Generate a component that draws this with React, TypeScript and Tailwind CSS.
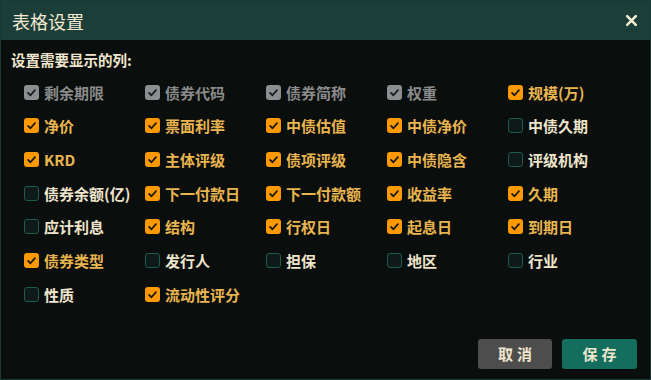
import React from 'react';

type State = 'locked' | 'on' | 'off';

const cols: { label: string; state: State }[] = [
  { label: '剩余期限', state: 'locked' },
  { label: '债券代码', state: 'locked' },
  { label: '债券简称', state: 'locked' },
  { label: '权重', state: 'locked' },
  { label: '规模(万)', state: 'on' },
  { label: '净价', state: 'on' },
  { label: '票面利率', state: 'on' },
  { label: '中债估值', state: 'on' },
  { label: '中债净价', state: 'on' },
  { label: '中债久期', state: 'off' },
  { label: 'KRD', state: 'on' },
  { label: '主体评级', state: 'on' },
  { label: '债项评级', state: 'on' },
  { label: '中债隐含', state: 'on' },
  { label: '评级机构', state: 'off' },
  { label: '债券余额(亿)', state: 'off' },
  { label: '下一付款日', state: 'on' },
  { label: '下一付款额', state: 'on' },
  { label: '收益率', state: 'on' },
  { label: '久期', state: 'on' },
  { label: '应计利息', state: 'off' },
  { label: '结构', state: 'on' },
  { label: '行权日', state: 'on' },
  { label: '起息日', state: 'on' },
  { label: '到期日', state: 'on' },
  { label: '债券类型', state: 'on' },
  { label: '发行人', state: 'off' },
  { label: '担保', state: 'off' },
  { label: '地区', state: 'off' },
  { label: '行业', state: 'off' },
  { label: '性质', state: 'off' },
  { label: '流动性评分', state: 'on' },
];

const Check = () => (
  <svg viewBox="0 0 16 16" className="w-[11px] h-[11px]">
    <path d="M3 8.5 L6.5 12 L13 4.5" fill="none" stroke="#1a1a1a" strokeWidth="2.6" strokeLinecap="round" strokeLinejoin="round" />
  </svg>
);

const Box = ({ state }: { state: State }) => {
  if (state === 'off')
    return <span className="w-[15px] h-[15px] rounded-[3px] border border-[#1d5a4f] bg-[#0e1a18] shrink-0" />;
  return (
    <span
      className={
        'w-[15px] h-[15px] rounded-[3px] flex items-center justify-center shrink-0 ' +
        (state === 'on' ? 'bg-[#ff9900]' : 'bg-[#8c8f92]')
      }
    >
      <Check />
    </span>
  );
};

export default function App() {
  return (
    <div
      className="w-[651px] h-[380px] flex flex-col bg-[#0a0e0d] border border-[#163a34] overflow-hidden"
      style={{ fontFamily: '"Noto Sans CJK SC", "Noto Sans", sans-serif' }}
    >
      <div className="h-[39px] bg-[#1c3e39] flex items-center justify-between pl-[11px] pr-[12px] shrink-0">
        <span className="text-[18px] text-[#f3ead2] leading-none">表格设置</span>
        <svg viewBox="0 0 12 12" className="w-[13px] h-[13px]">
          <path d="M2 2 L10 10 M10 2 L2 10" stroke="#f3ead2" strokeWidth="2.4" strokeLinecap="round" />
        </svg>
      </div>
      <div className="pl-[10px] pt-[11px] text-[14.5px] font-bold text-[#efe5cc] leading-[18px]">设置需要显示的列:</div>
      <div className="grid grid-cols-[121px_121px_121px_121px_121px] pl-[23px] pt-[13px] auto-rows-[33.7px]">
        {cols.map((c) => (
          <div key={c.label} className="flex items-center gap-[5px] h-[20px]">
            <Box state={c.state} />
            <span
              className={
                'text-[15px] font-bold leading-none whitespace-nowrap ' +
                (c.state === 'locked' ? 'text-[#8b8b8b]' : c.state === 'on' ? 'text-[#e9b54f]' : 'text-[#efe5cc]')
              }
            >
              {c.label}
            </span>
          </div>
        ))}
      </div>
      <div className="flex-1" />
      <div className="flex justify-end gap-[10px] pr-[13px] pb-[10px]">
        <button className="w-[74px] h-[30px] rounded-[3px] bg-[#4d4d4d] text-[#efe5cc] text-[15px] font-bold tracking-[4px] pl-[4px]">取消</button>
        <button className="w-[75px] h-[30px] rounded-[3px] bg-[#136e5e] text-[#efe5cc] text-[15px] font-bold tracking-[4px] pl-[4px]">保存</button>
      </div>
    </div>
  );
}
